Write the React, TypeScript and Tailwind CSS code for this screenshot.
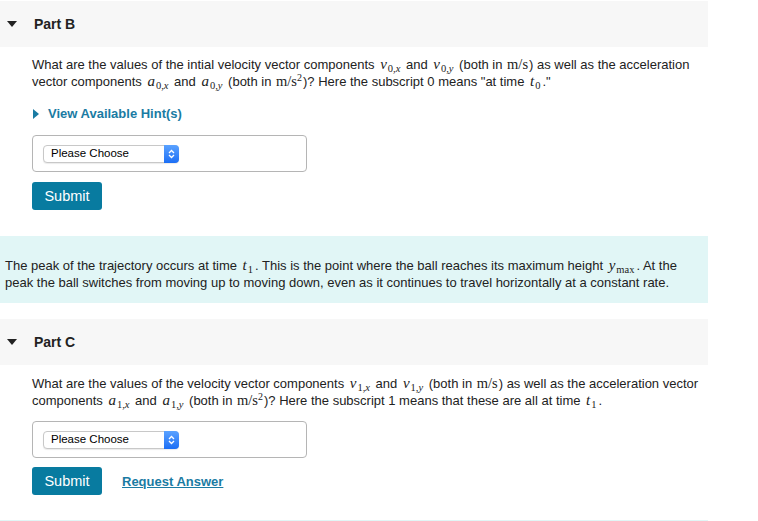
import type { ReactNode } from "react";

const serif = { fontFamily: "'Liberation Serif', 'DejaVu Serif', serif" };

const V = ({ c, sub }: { c: string; sub?: string }) => {
  const parts = sub ? sub.split(",") : [];
  return (
    <span className="mx-[2px] whitespace-nowrap leading-none" style={serif}>
      <i className="text-[15px]">{c}</i>
      {sub && (
        <sub className="ml-[1px] text-[10.5px] leading-none">
          {parts.map((p, i) => (
            <span key={i}>
              {i > 0 && ","}
              {/^[0-9]+$/.test(p) || p === "max" ? p : <i>{p}</i>}
            </span>
          ))}
        </sub>
      )}
    </span>
  );
};

const Unit = ({ children }: { children: ReactNode }) => (
  <span className="mx-[1px] text-[14.5px] leading-none" style={serif}>
    {children}
  </span>
);

const PartHeader = ({ label }: { label: string }) => (
  <div className="flex h-[46px] w-[708px] items-center bg-[#f7f7f7]">
    <svg width="10" height="6" viewBox="0 0 10 6" className="ml-[7px]">
      <path d="M0 0h10L5 6z" fill="#222" />
    </svg>
    <span className="ml-[17px] text-[14px] font-bold text-[#222]">{label}</span>
  </div>
);

const Chooser = () => (
  <div className="flex h-[37px] w-[275px] items-center rounded-[4px] border border-[#b5b5b5] pl-[10px]">
    <div className="flex h-[18px] w-[136px] items-center rounded-[4px] border border-[#c8c8c8] bg-white shadow-[0_1px_1px_rgba(0,0,0,0.08)]">
      <span className="flex-1 pl-[7px] text-[11.5px] text-black">Please Choose</span>
      <div className="-mr-px flex h-[18px] w-[15px] items-center justify-center rounded-r-[4px] bg-gradient-to-b from-[#5aa2ff] to-[#1b6ef5]">
        <svg width="7" height="10" viewBox="0 0 7 10">
          <path d="M1 4l2.5-2.5L6 4M1 6l2.5 2.5L6 6" stroke="#fff" strokeWidth="1.3" fill="none" />
        </svg>
      </div>
    </div>
  </div>
);

const SubmitBtn = () => (
  <button className="h-[28px] w-[70px] rounded-[3px] bg-[#087ba0] text-[14.5px] text-white">Submit</button>
);

const Sq = () => (
  <Unit>
    m/s<sup className="text-[10px] leading-none">2</sup>
  </Unit>
);

export default function App() {
  return (
    <div
      className="h-[521px] w-[758px] overflow-hidden bg-white pt-px text-[13px] leading-[17px] text-[#222]"
      style={{ fontFamily: "'Liberation Sans', Arial, sans-serif" }}
    >
      <PartHeader label="Part B" />
      <div className="pl-[32px]">
        <p className="mt-[9px] w-[670px]">
          What are the values of the intial velocity vector components <V c="v" sub="0,x" /> and <V c="v" sub="0,y" /> (both in{" "}
          <Unit>m/s</Unit>) as well as the acceleration vector components <V c="a" sub="0,x" /> and <V c="a" sub="0,y" /> (both in <Sq />
          )? Here the subscript 0 means "at time <V c="t" sub="0" />."
        </p>
        <div className="mt-[15px] flex items-center">
          <svg width="6" height="10" viewBox="0 0 6 10" className="ml-[1px]">
            <path d="M0 0l6 5-6 5z" fill="#1a7ba3" />
          </svg>
          <span className="ml-[9px] font-bold text-[#1a7ba3]">View Available Hint(s)</span>
        </div>
        <div className="mt-[13px]">
          <Chooser />
        </div>
        <div className="mt-[10px]">
          <SubmitBtn />
        </div>
      </div>

      <div className="mt-[26px] h-[67px] w-[708px] bg-[#e1f6f6] pl-[5px] pt-[21px]">
        <p className="w-[692px]">
          The peak of the trajectory occurs at time <V c="t" sub="1" />. This is the point where the ball reaches its maximum height{" "}
          <V c="y" sub="max" />. At the peak the ball switches from moving up to moving down, even as it continues to travel horizontally at a
          constant rate.
        </p>
      </div>

      <div className="mt-[16px]">
        <PartHeader label="Part C" />
      </div>
      <div className="pl-[32px]">
        <p className="mt-[10px] w-[680px]">
          What are the values of the velocity vector components <V c="v" sub="1,x" /> and <V c="v" sub="1,y" /> (both in <Unit>m/s</Unit>) as
          well as the acceleration vector components <V c="a" sub="1,x" /> and <V c="a" sub="1,y" /> (both in <Sq />
          )? Here the subscript 1 means that these are all at time <V c="t" sub="1" />.
        </p>
        <div className="mt-[12px]">
          <Chooser />
        </div>
        <div className="mt-[9px] flex items-center">
          <SubmitBtn />
          <a className="ml-[20px] font-bold text-[#1a7ba3] underline">Request Answer</a>
        </div>
      </div>
      <div className="mt-[25px] h-[4px] w-[708px] bg-[#e1f6f6]" />
    </div>
  );
}
